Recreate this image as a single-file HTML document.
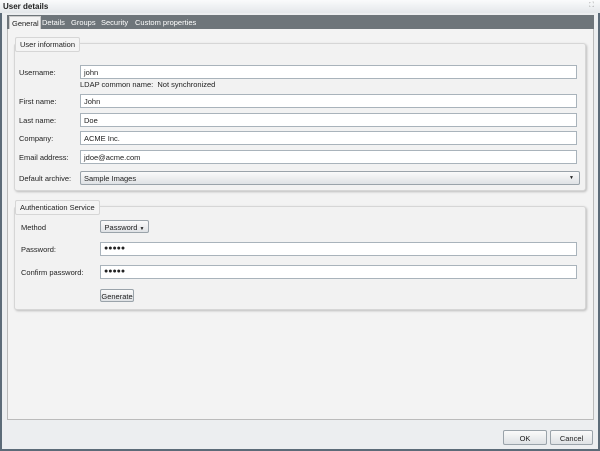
<!DOCTYPE html>
<html><head><style>
*{box-sizing:border-box;margin:0;padding:0}
body{width:600px;height:451px;background:#eef0f2;font-family:"Liberation Sans",sans-serif;font-size:8px;color:#222;position:relative;overflow:hidden}
.abs{position:absolute}
.title{left:0;top:0;width:600px;height:13px;background:linear-gradient(#fafbfc,#e4e7ea);font-weight:bold;font-size:8px;padding:2px 3px}
.frame{left:0;top:13px;width:600px;height:438px;border:2px solid #5c6b78;border-top:none;background:#eceef0}
.tabs{left:7px;top:15px;width:587px;height:14px;background:#6e757a}
.tab{position:absolute;top:3px;color:#fff;font-size:7.5px}
.content{left:7px;top:29px;width:587px;height:391px;background:#f3f3f3;border:1px solid #bbb;border-top:none}
.grp{position:absolute;border:1px solid #d6d6d6;border-radius:3px;background:#f2f2f2;box-shadow:1px 1px 2px #bbb}
.leg{position:absolute;border:1px solid #d6d6d6;border-radius:2px;background:#f4f4f4;padding:2px 4px;font-size:7.5px}
.lbl{position:absolute;left:19px;font-size:7.5px}
.inp{position:absolute;background:#fff;border:1px solid #a9b3bb;height:14px;font-size:7.5px;padding:2px 3px}
.btn{position:absolute;border:1px solid #9aa3aa;border-radius:2px;background:linear-gradient(#fafafa,#dfe2e5);font-size:7.5px;text-align:center;padding-top:2px}
</style></head><body>
<div class="abs title">User details</div>
<div class="abs" style="right:6px;top:2px;font-size:7px;color:#999">⛶</div>
<div class="abs frame"></div>
<div class="abs tabs">
<div style="position:absolute;left:2px;top:1px;width:32px;height:13px;background:#f3f3f3;border:1px solid #ccc;border-bottom:none;padding:2px 2px;font-size:7.5px">General</div>
<div class="tab" style="left:35px">Details</div>
<div class="tab" style="left:64px">Groups</div>
<div class="tab" style="left:94px">Security</div>
<div class="tab" style="left:128px">Custom properties</div>
</div>
<div class="abs content"></div>
<div class="grp" style="left:14px;top:43px;width:572px;height:148px"></div>
<div class="leg" style="left:15px;top:37px">User information</div>
<div class="lbl" style="top:68px">Username:</div>
<div class="inp" style="left:80px;top:65px;width:497px">john</div>
<div class="abs" style="left:80px;top:80px;font-size:7.5px">LDAP common name:&nbsp;&nbsp;Not synchronized</div>
<div class="lbl" style="top:97px">First name:</div>
<div class="inp" style="left:80px;top:94px;width:497px">John</div>
<div class="lbl" style="top:116px">Last name:</div>
<div class="inp" style="left:80px;top:113px;width:497px">Doe</div>
<div class="lbl" style="top:134px">Company:</div>
<div class="inp" style="left:80px;top:131px;width:497px">ACME Inc.</div>
<div class="lbl" style="top:153px">Email address:</div>
<div class="inp" style="left:80px;top:150px;width:497px">jdoe@acme.com</div>
<div class="lbl" style="top:174px">Default archive:</div>
<div class="btn" style="left:80px;top:171px;width:500px;height:14px;text-align:left;padding-left:3px">Sample Images<span style="position:absolute;right:5px;top:3px;font-size:5px">▼</span></div>
<div class="grp" style="left:14px;top:206px;width:572px;height:104px"></div>
<div class="leg" style="left:15px;top:200px">Authentication Service</div>
<div class="lbl" style="left:21px;top:223px">Method</div>
<div class="btn" style="left:100px;top:220px;width:49px;height:13px">Password <span style="font-size:5px">▼</span></div>
<div class="lbl" style="left:21px;top:245px">Password:</div>
<div class="inp" style="left:100px;top:242px;width:477px;font-size:7px;font-weight:bold">●●●●●</div>
<div class="lbl" style="left:21px;top:268px">Confirm password:</div>
<div class="inp" style="left:100px;top:265px;width:477px;font-size:7px;font-weight:bold">●●●●●</div>
<div class="btn" style="left:100px;top:289px;width:34px;height:13px">Generate</div>
<div class="btn" style="left:503px;top:430px;width:44px;height:15px;padding-top:3px">OK</div>
<div class="btn" style="left:550px;top:430px;width:43px;height:15px;padding-top:3px">Cancel</div>
</body></html>
